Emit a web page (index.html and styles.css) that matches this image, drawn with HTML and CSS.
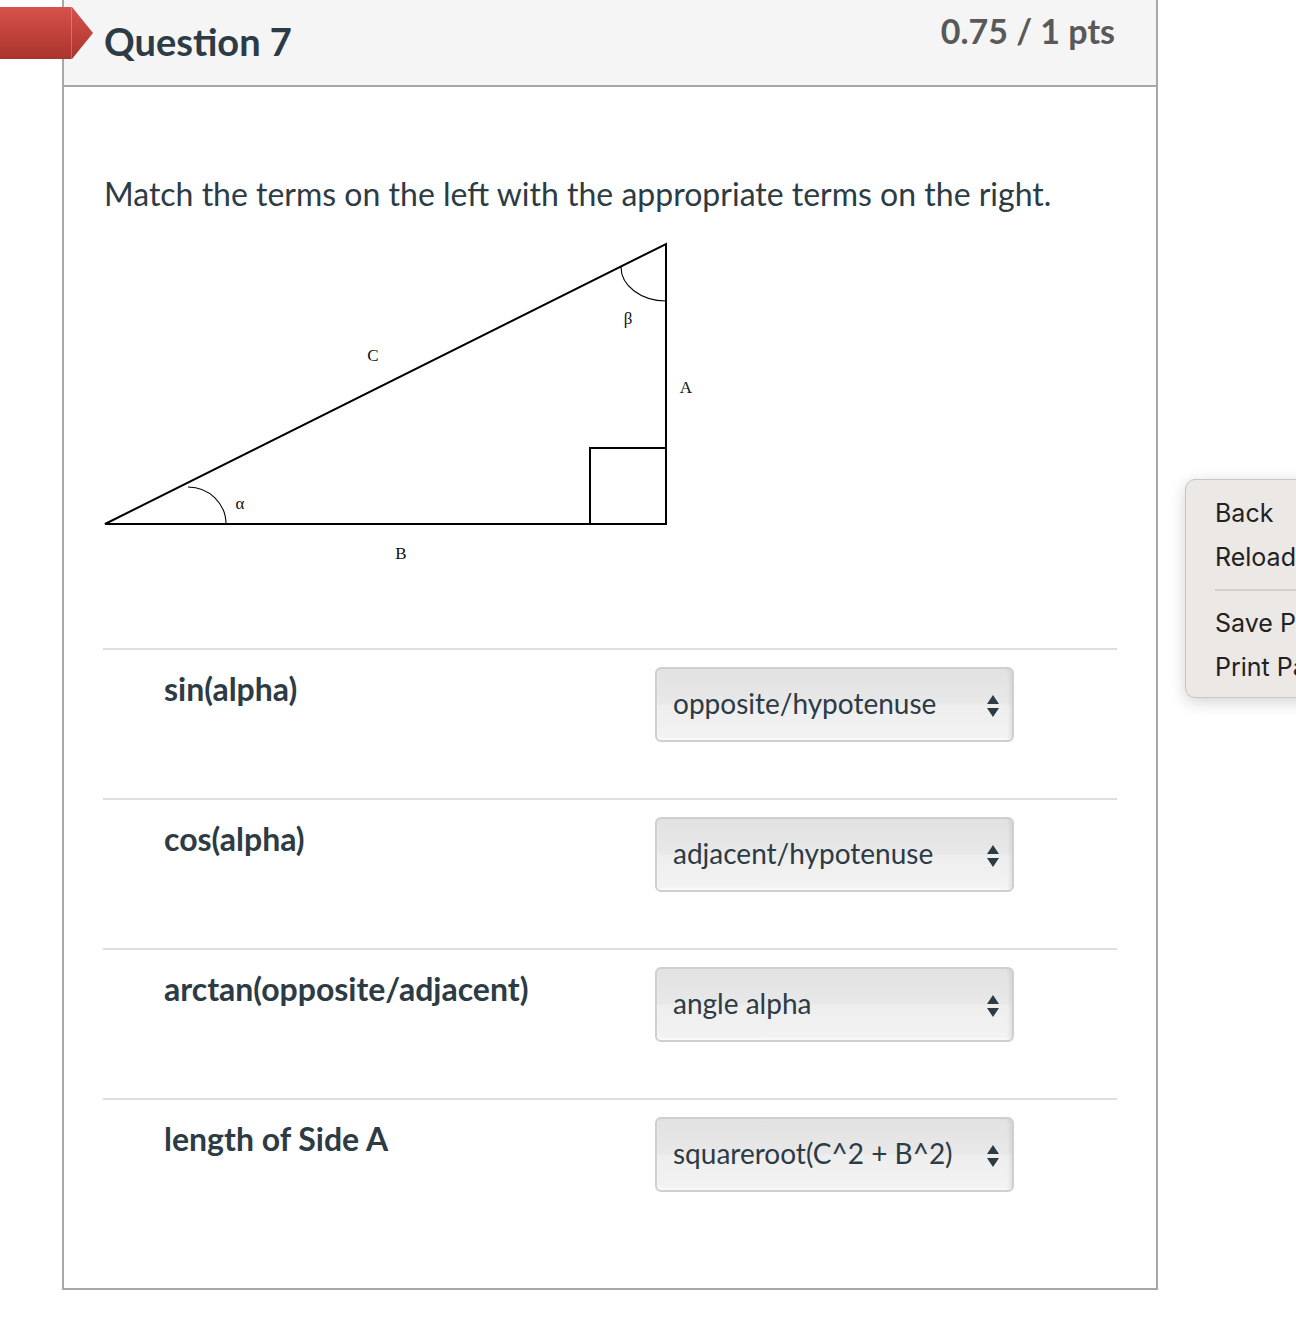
FILE: index.html
```html
<!DOCTYPE html>
<html lang="en">
<head>
<meta charset="utf-8">
<title>Question 7</title>
<link rel="stylesheet" href="styles.css">
</head>
<body>
<div class="flag"><span class="flag-body"></span><span class="flag-tip"></span></div>
<div class="question">
  <div class="q-header">
    <h2 class="q-title">Question 7</h2>
    <div class="q-points">0.75 / 1 pts</div>
  </div>
  <div class="q-content">
    <p class="q-text">Match the terms on the left with the appropriate terms on the right.</p>
    <svg class="figure" width="600" height="340" viewBox="104 238 600 340" xmlns="http://www.w3.org/2000/svg">
      <g fill="none" stroke="#000">
        <path d="M106,524 L667,244 L667,524 Z" stroke-width="2" stroke-linejoin="miter"/>
        <rect x="591" y="448" width="76" height="76" stroke-width="2"/>
        <path d="M189,487 A38,37 0 0 1 227,524" stroke-width="1.1"/>
        <path d="M622,267 A45,34 0 0 0 667,301" stroke-width="1.1"/>
      </g>
      <g font-family="'Liberation Serif', 'DejaVu Serif', serif" font-size="17" fill="#111" text-anchor="middle">
        <text x="374" y="361">C</text>
        <text x="629" y="324">β</text>
        <text x="687" y="393">A</text>
        <text x="402" y="559">B</text>
        <text x="241" y="509">α</text>
      </g>
    </svg>
    <div class="answers">
      <div class="answer">
        <div class="term">sin(alpha)</div>
        <div class="select"><span class="select-text">opposite/hypotenuse</span><span class="arrows"><span class="up"></span><span class="down"></span></span></div>
      </div>
      <div class="answer">
        <div class="term">cos(alpha)</div>
        <div class="select"><span class="select-text">adjacent/hypotenuse</span><span class="arrows"><span class="up"></span><span class="down"></span></span></div>
      </div>
      <div class="answer">
        <div class="term">arctan(opposite/adjacent)</div>
        <div class="select"><span class="select-text">angle alpha</span><span class="arrows"><span class="up"></span><span class="down"></span></span></div>
      </div>
      <div class="answer">
        <div class="term">length of Side A</div>
        <div class="select"><span class="select-text">squareroot(C^2 + B^2)</span><span class="arrows"><span class="up"></span><span class="down"></span></span></div>
      </div>
    </div>
  </div>
</div>
<div class="context-menu">
  <div class="menu-item">Back</div>
  <div class="menu-item">Reload</div>
  <div class="menu-sep"></div>
  <div class="menu-item">Save Page As…</div>
  <div class="menu-item">Print Page…</div>
</div>
</body>
</html>
```
FILE: styles.css
```css
html, body {
  margin: 0;
  padding: 0;
  background: #fff;
}
body {
  width: 1296px;
  height: 1324px;
  overflow: hidden;
  position: relative;
  font-family: Lato, "Open Sans", sans-serif;
  color: #2d3b45;
}
.flag {
  position: absolute;
  left: 0;
  top: 7px;
  height: 52px;
  display: flex;
  z-index: 2;
}
.flag-body {
  width: 72px;
  height: 52px;
  background: linear-gradient(#d6524b, #aa342c);
  border-right: 1px solid rgba(255,255,255,0.25);
  box-sizing: border-box;
}
.flag-tip {
  width: 21px;
  height: 52px;
  background: linear-gradient(#d6524b, #aa342c);
  clip-path: polygon(0 0, 100% 50%, 0 100%);
}
.question {
  margin-left: 62px;
  width: 1096px;
  box-sizing: border-box;
  border-left: 2px solid #a8a8a8;
  border-right: 2px solid #a8a8a8;
  border-bottom: 2px solid #a8a8a8;
  height: 1290px;
}
.q-header {
  height: 85px;
  background: #f5f5f5;
  border-bottom: 2px solid #a8a8a8;
  display: flex;
  justify-content: space-between;
  padding: 0 41px 0 40px;
}
.q-title {
  margin: 0;
  padding-top: 19px;
  font-size: 38px;
  line-height: 44px;
  font-weight: 700;
  color: #2d3b45;
}
.q-points {
  padding-top: 11px;
  font-size: 34px;
  line-height: 40px;
  font-weight: 700;
  color: #595959;
}
.q-content {
  padding: 88px 39px 0 39px;
}
.q-text {
  margin: 0 0 0 1px;
  font-size: 32px;
  line-height: 37px;
  color: #2d3b45;
}
.figure {
  display: block;
  margin-top: 26px;
}
.answers {
  margin-top: 70px;
}
.answer {
  height: 148px;
  border-top: 2px solid #dedede;
  display: flex;
  align-items: flex-start;
}
.term {
  width: 491px;
  padding-left: 61px;
  padding-top: 20px;
  font-size: 32px;
  line-height: 38px;
  font-weight: 700;
  color: #2d3b45;
}
.select {
  margin-top: 17px;
  width: 359px;
  height: 75px;
  box-sizing: border-box;
  border: 2px solid #cfcfcf;
  border-radius: 6px;
  background: linear-gradient(#e2e2e2, #e8e8e8 48%, #eeeeee 52%, #f3f3f3);
  box-shadow: inset -4px 0 4px -3px rgba(0,0,0,0.12), inset 0 -2px 2px rgba(255,255,255,0.6);
  display: flex;
  align-items: center;
  justify-content: space-between;
  padding: 0 13px 0 16px;
}
.select-text {
  font-size: 28px;
  line-height: 34px;
  color: #2d3b45;
  padding-bottom: 3px;
}
.arrows {
  display: flex;
  flex-direction: column;
  gap: 4px;
  padding-top: 2px;
}
.up, .down {
  width: 0;
  height: 0;
  border-left: 6px solid transparent;
  border-right: 6px solid transparent;
}
.up {
  border-bottom: 9px solid #2d3b45;
}
.down {
  border-top: 9px solid #2d3b45;
}
.context-menu {
  position: absolute;
  left: 1185px;
  top: 479px;
  width: 200px;
  height: 219px;
  box-sizing: border-box;
  background: #ece8e6;
  border: 1px solid #c9c5c3;
  border-radius: 10px;
  box-shadow: 0 4px 16px rgba(0,0,0,0.18);
  padding: 11px 0 0 29px;
  font-family: Inter, "Noto Sans", sans-serif;
  font-size: 25px;
  color: #222;
  white-space: nowrap;
}
.menu-item {
  height: 44px;
  line-height: 44px;
}
.menu-sep {
  height: 2px;
  background: #d3cfcd;
  margin: 10px 0 10px 0;
  width: 200px;
}
```
